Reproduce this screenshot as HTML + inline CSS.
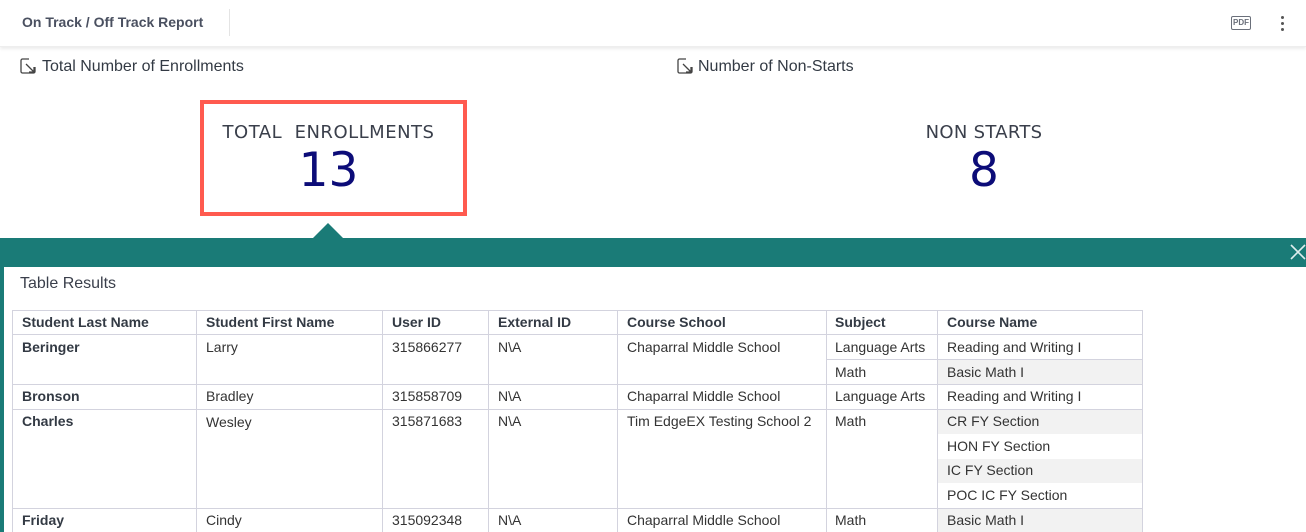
<!DOCTYPE html>
<html><head><style>
*{margin:0;padding:0;box-sizing:border-box}
body{width:1306px;height:532px;overflow:hidden;background:#fff;font-family:"Liberation Sans",Arial,sans-serif;position:relative;color:#333}
.a{position:absolute;white-space:nowrap}
.hdr{position:absolute;left:0;top:0;width:1306px;height:47px;background:#fff;box-shadow:0 2px 3px rgba(0,0,0,0.08);border-bottom:1px solid #eee}
.kt{font-family:"DejaVu Sans",sans-serif;color:#3a3f4b;font-size:18px;letter-spacing:0.3px}
.kn{font-family:"DejaVu Sans",sans-serif;color:#0c0c78;font-size:47px}
.tl{position:absolute;background:#d3d3de}
.c{position:absolute;font-size:14px;color:#333;white-space:nowrap}
.b{font-weight:bold;color:#333a44}
.g{position:absolute;background:#f2f2f2}
</style></head><body>
<div class="hdr"></div>
<div class="a" style="left:22px;top:14px;font-size:14px;font-weight:bold;color:#4a5060">On Track / Off Track Report</div>
<div style="position:absolute;left:229px;top:9px;width:1px;height:27px;background:#e4e4e4"></div>
<div class="a" style="left:1231px;top:16px;width:20px;height:14px;border:1px solid #6a6f7a;border-radius:2px;font-size:8px;color:#6a6f7a;text-align:center;line-height:12px;font-weight:bold">PDF</div>
<div style="position:absolute;left:1281px;top:16px;width:3px;height:3px;background:#555;border-radius:50%"></div>
<div style="position:absolute;left:1281px;top:22px;width:3px;height:3px;background:#555;border-radius:50%"></div>
<div style="position:absolute;left:1281px;top:28px;width:3px;height:3px;background:#555;border-radius:50%"></div>

<svg class="a" style="left:20px;top:58px" width="16" height="16" viewBox="0 0 16 16"><path d="M9 1H2.5A1.5 1.5 0 0 0 1 2.5v11A1.5 1.5 0 0 0 2.5 15H13.5A1.5 1.5 0 0 0 15 13.5V9" fill="none" stroke="#444" stroke-width="1.3"/><path d="M6 6l8 8M14 9v5H9" fill="none" stroke="#444" stroke-width="1.3"/></svg>
<div class="a" style="left:42px;top:58px;font-size:16px;color:#333a44">Total Number of Enrollments</div>
<svg class="a" style="left:677px;top:58px" width="16" height="16" viewBox="0 0 16 16"><path d="M9 1H2.5A1.5 1.5 0 0 0 1 2.5v11A1.5 1.5 0 0 0 2.5 15H13.5A1.5 1.5 0 0 0 15 13.5V9" fill="none" stroke="#444" stroke-width="1.3"/><path d="M6 6l8 8M14 9v5H9" fill="none" stroke="#444" stroke-width="1.3"/></svg>
<div class="a" style="left:698px;top:58px;font-size:16px;color:#333a44">Number of Non-Starts</div>

<div style="position:absolute;left:200px;top:100px;width:267px;height:116px;border:4px solid #ff5a4f"></div>
<div class="a kt" style="left:195px;width:267px;text-align:center;top:122px;letter-spacing:0.5px">TOTAL&nbsp; ENROLLMENTS</div>
<div class="a kn" style="left:200px;width:257px;text-align:center;top:143px">13</div>
<div class="a kt" style="left:850px;width:268px;text-align:center;top:122px">NON STARTS</div>
<div class="a kn" style="left:850px;width:268px;text-align:center;top:143px">8</div>

<div style="position:absolute;left:0;top:238px;width:1306px;height:294px;background:#1a7b77"></div>
<div style="position:absolute;left:312px;top:223px;width:0;height:0;border-left:16px solid transparent;border-right:16px solid transparent;border-bottom:16px solid #1a7b77"></div>
<svg class="a" style="left:1290px;top:244px" width="16" height="16" viewBox="0 0 16 16"><path d="M1 1L15 15M15 1L1 15" stroke="#dfeeee" stroke-width="1.6"/></svg>
<div style="position:absolute;left:4px;top:267px;width:1302px;height:265px;background:#fff"></div>
<div class="a" style="left:20px;top:275px;font-size:16px;color:#3a3f4b">Table Results</div>

<div class="g" style="left:938px;top:360px;width:204px;height:24px"></div>
<div class="g" style="left:938px;top:410px;width:204px;height:24px"></div>
<div class="g" style="left:938px;top:459px;width:204px;height:24px"></div>
<div class="g" style="left:938px;top:509px;width:204px;height:23px"></div>
<div class="tl" style="left:12px;top:310px;width:1131px;height:1px"></div>
<div class="tl" style="left:12px;top:334px;width:1131px;height:1px"></div>
<div class="tl" style="left:826px;top:359px;width:317px;height:1px"></div>
<div class="tl" style="left:12px;top:384px;width:1131px;height:1px"></div>
<div class="tl" style="left:12px;top:409px;width:1131px;height:1px"></div>
<div class="tl" style="left:12px;top:508px;width:1131px;height:1px"></div>
<div class="tl" style="left:12px;top:310px;width:1px;height:222px"></div>
<div class="tl" style="left:196px;top:310px;width:1px;height:222px"></div>
<div class="tl" style="left:382px;top:310px;width:1px;height:222px"></div>
<div class="tl" style="left:488px;top:310px;width:1px;height:222px"></div>
<div class="tl" style="left:617px;top:310px;width:1px;height:222px"></div>
<div class="tl" style="left:826px;top:310px;width:1px;height:222px"></div>
<div class="tl" style="left:937px;top:310px;width:1px;height:222px"></div>
<div class="tl" style="left:1142px;top:310px;width:1px;height:222px"></div>

<div class="c b" style="left:22px;top:314px">Student Last Name</div>
<div class="c b" style="left:206px;top:314px">Student First Name</div>
<div class="c b" style="left:392px;top:314px">User ID</div>
<div class="c b" style="left:498px;top:314px">External ID</div>
<div class="c b" style="left:627px;top:314px">Course School</div>
<div class="c b" style="left:835px;top:314px">Subject</div>
<div class="c b" style="left:947px;top:314px">Course Name</div>

<div class="c b" style="left:22px;top:339px">Beringer</div>
<div class="c" style="left:206px;top:339px">Larry</div>
<div class="c" style="left:392px;top:339px">315866277</div>
<div class="c" style="left:498px;top:339px">N\A</div>
<div class="c" style="left:627px;top:339px">Chaparral Middle School</div>
<div class="c" style="left:835px;top:339px">Language Arts</div>
<div class="c" style="left:947px;top:339px">Reading and Writing I</div>
<div class="c" style="left:835px;top:364px">Math</div>
<div class="c" style="left:947px;top:364px">Basic Math I</div>

<div class="c b" style="left:22px;top:388px">Bronson</div>
<div class="c" style="left:206px;top:388px">Bradley</div>
<div class="c" style="left:392px;top:388px">315858709</div>
<div class="c" style="left:498px;top:388px">N\A</div>
<div class="c" style="left:627px;top:388px">Chaparral Middle School</div>
<div class="c" style="left:835px;top:388px">Language Arts</div>
<div class="c" style="left:947px;top:388px">Reading and Writing I</div>

<div class="c b" style="left:22px;top:413px">Charles</div>
<div class="c" style="left:206px;top:414px">Wesley</div>
<div class="c" style="left:392px;top:413px">315871683</div>
<div class="c" style="left:498px;top:413px">N\A</div>
<div class="c" style="left:627px;top:413px">Tim EdgeEX Testing School 2</div>
<div class="c" style="left:835px;top:413px">Math</div>
<div class="c" style="left:947px;top:413px">CR FY Section</div>
<div class="c" style="left:947px;top:438px">HON FY Section</div>
<div class="c" style="left:947px;top:462px">IC FY Section</div>
<div class="c" style="left:947px;top:487px">POC IC FY Section</div>

<div class="c b" style="left:22px;top:512px">Friday</div>
<div class="c" style="left:206px;top:512px">Cindy</div>
<div class="c" style="left:392px;top:512px">315092348</div>
<div class="c" style="left:498px;top:512px">N\A</div>
<div class="c" style="left:627px;top:512px">Chaparral Middle School</div>
<div class="c" style="left:835px;top:512px">Math</div>
<div class="c" style="left:947px;top:512px">Basic Math I</div>
</body></html>
